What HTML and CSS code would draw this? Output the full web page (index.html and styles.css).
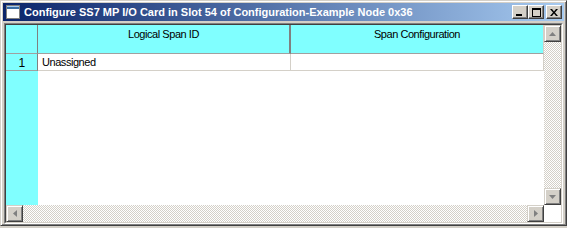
FILE: index.html
```html
<!DOCTYPE html>
<html>
<head>
<meta charset="utf-8">
<link rel="stylesheet" href="styles.css">
</head>
<body>
<div class="window">
  <div class="titlebar">
    <span class="appicon">
      <svg width="14" height="14" viewBox="0 0 14 14">
        <rect x="0.5" y="0.5" width="13" height="13" fill="#fff" stroke="#808080"/>
        <rect x="1" y="1" width="12" height="3" fill="#3a6ea5"/>
        <line x1="1" y1="1.5" x2="13" y2="1.5" stroke="#a6caf0"/>
      </svg>
    </span>
    <span class="title">Configure SS7 MP I/O Card in Slot 54 of Configuration-Example Node 0x36</span>
    <div class="controls">
      <span class="cbtn">
        <svg width="8" height="7" viewBox="0 0 8 7"><rect x="0" y="5" width="6" height="2" fill="#000"/></svg>
      </span>
      <span class="cbtn">
        <svg width="9" height="9" viewBox="0 0 9 9"><rect x="0.5" y="0.5" width="8" height="8" fill="none" stroke="#000"/><rect x="0" y="0" width="9" height="2" fill="#000"/></svg>
      </span>
      <span class="cbtn close">
        <svg width="8" height="7" viewBox="0 0 8 7"><path d="M0 0h2l2 2.5 2-2.5h2l-3 3.5 3 3.5h-2l-2-2.5-2 2.5h-2l3-3.5z" fill="#000"/></svg>
      </span>
    </div>
  </div>
  <div class="client">
    <div class="sunken">
      <div class="view">
        <div class="table">
          <div class="cell corner-head"></div>
          <div class="cell head">Logical Span ID</div>
          <div class="cell head head-last">Span Configuration</div>
          <div class="cell rowhead">1</div>
          <div class="cell data">Unassigned</div>
          <div class="cell data"></div>
          <div class="cell rowfill"></div>
          <div class="cell fill"></div>
        </div>
        <div class="vscroll">
          <span class="sbtn"><svg width="7" height="4" viewBox="0 0 7 4"><path d="M3.5 0L7 4H0z" fill="#808080"/></svg></span>
          <span class="track"></span>
          <span class="sbtn"><svg width="7" height="4" viewBox="0 0 7 4"><path d="M0 0h7L3.5 4z" fill="#808080"/></svg></span>
        </div>
        <div class="hscroll">
          <span class="sbtn"><svg width="4" height="7" viewBox="0 0 4 7"><path d="M4 0v7L0 3.5z" fill="#808080"/></svg></span>
          <span class="track"></span>
          <span class="sbtn"><svg width="4" height="7" viewBox="0 0 4 7"><path d="M0 0v7L4 3.5z" fill="#808080"/></svg></span>
        </div>
        <div class="sizebox"></div>
      </div>
    </div>
  </div>
</div>
</body>
</html>
```
FILE: styles.css
```css
* { box-sizing: border-box; }
html, body { margin: 0; padding: 0; background: #d4d0c8; }
body { width: 567px; height: 228px; overflow: hidden; }

.window {
  width: 567px;
  height: 226px;
  background: #d4d0c8;
  border: 1px solid;
  border-color: #d4d0c8 #404040 #404040 #d4d0c8;
  box-shadow: inset 1px 1px 0 #fff, inset -1px -1px 0 #808080;
  display: flex;
  flex-direction: column;
}
.titlebar {
  margin: 2px 2px 0 2px;
  height: 18px;
  flex: none;
  display: flex;
  align-items: center;
  padding: 0 2px 0 2px;
  background: linear-gradient(to right, #0a246a, #a6caf0);
  color: #fff;
}
.appicon { width: 16px; height: 16px; display: flex; align-items: center; justify-content: center; flex: none; }
.title {
  margin-left: 3px;
  font-family: "Liberation Sans", Arial, sans-serif;
  font-weight: bold;
  font-size: 11px;
  white-space: nowrap;
  letter-spacing: 0;
  flex: 1;
}
.controls { display: flex; flex: none; }
.cbtn {
  width: 16px;
  height: 14px;
  background: #d4d0c8;
  border: 1px solid;
  border-color: #fff #404040 #404040 #fff;
  box-shadow: inset -1px -1px 0 #808080;
  display: flex;
  align-items: center;
  justify-content: center;
}
.cbtn.close { margin-left: 2px; }

.client {
  flex: 1;
  margin: 0 1px 1px 1px;
  padding: 2px 2px 0 2px;
  display: flex;
}
.sunken {
  flex: 1;
  border: 1px solid;
  border-color: #808080 #fff #fff #808080;
  display: flex;
}
.view {
  flex: 1;
  border: 1px solid;
  border-color: #404040 #d4d0c8 #d4d0c8 #404040;
  display: grid;
  grid-template-columns: 1fr 17px;
  grid-template-rows: 1fr 17px;
  background: #fff;
}
.table {
  display: grid;
  grid-template-columns: 32px 253px 253px;
  grid-template-rows: 29px 17px 1fr;
  font-family: "Liberation Sans", Arial, sans-serif;
  font-size: 11px;
  letter-spacing: -0.45px;
  color: #000;
  overflow: hidden;
}
.cell { white-space: nowrap; overflow: hidden; }
.corner-head {
  background: #80ffff;
  border-right: 1px solid #808080;
  border-bottom: 1px solid #a0a0a0;
}
.head {
  background: #80ffff;
  text-align: center;
  padding-top: 3px;
  border-right: 2px solid #808080;
  border-bottom: 1px solid #a0a0a0;
}
.head-last { border-right: 1px solid #d4d0c8; }
.rowhead {
  background: #80ffff;
  text-align: center;
  border-right: 1px solid #808080;
  border-bottom: 1px solid #a0a0a0;
  padding-top: 2px;
  font-size: 12px;
}
.data {
  background: #fff;
  border-right: 1px solid #d4d0c8;
  border-bottom: 1px solid #d4d0c8;
  padding: 2px 0 0 4px;
}
.rowfill { background: #80ffff; }
.fill { grid-column: 2 / 4; background: #fff; }

.vscroll, .hscroll {
  display: flex;
  background: repeating-conic-gradient(#d4d0c8 0 25%, #fff 0 50%) 0 0 / 2px 2px;
}
.vscroll { flex-direction: column; }
.track { flex: 1; }
.sbtn {
  width: 17px;
  height: 17px;
  flex: none;
  background: #d4d0c8;
  border: 1px solid;
  border-color: #d4d0c8 #404040 #404040 #d4d0c8;
  box-shadow: inset 1px 1px 0 #fff, inset -1px -1px 0 #808080;
  display: flex;
  align-items: center;
  justify-content: center;
}
.sizebox { background: #fff; }
```
